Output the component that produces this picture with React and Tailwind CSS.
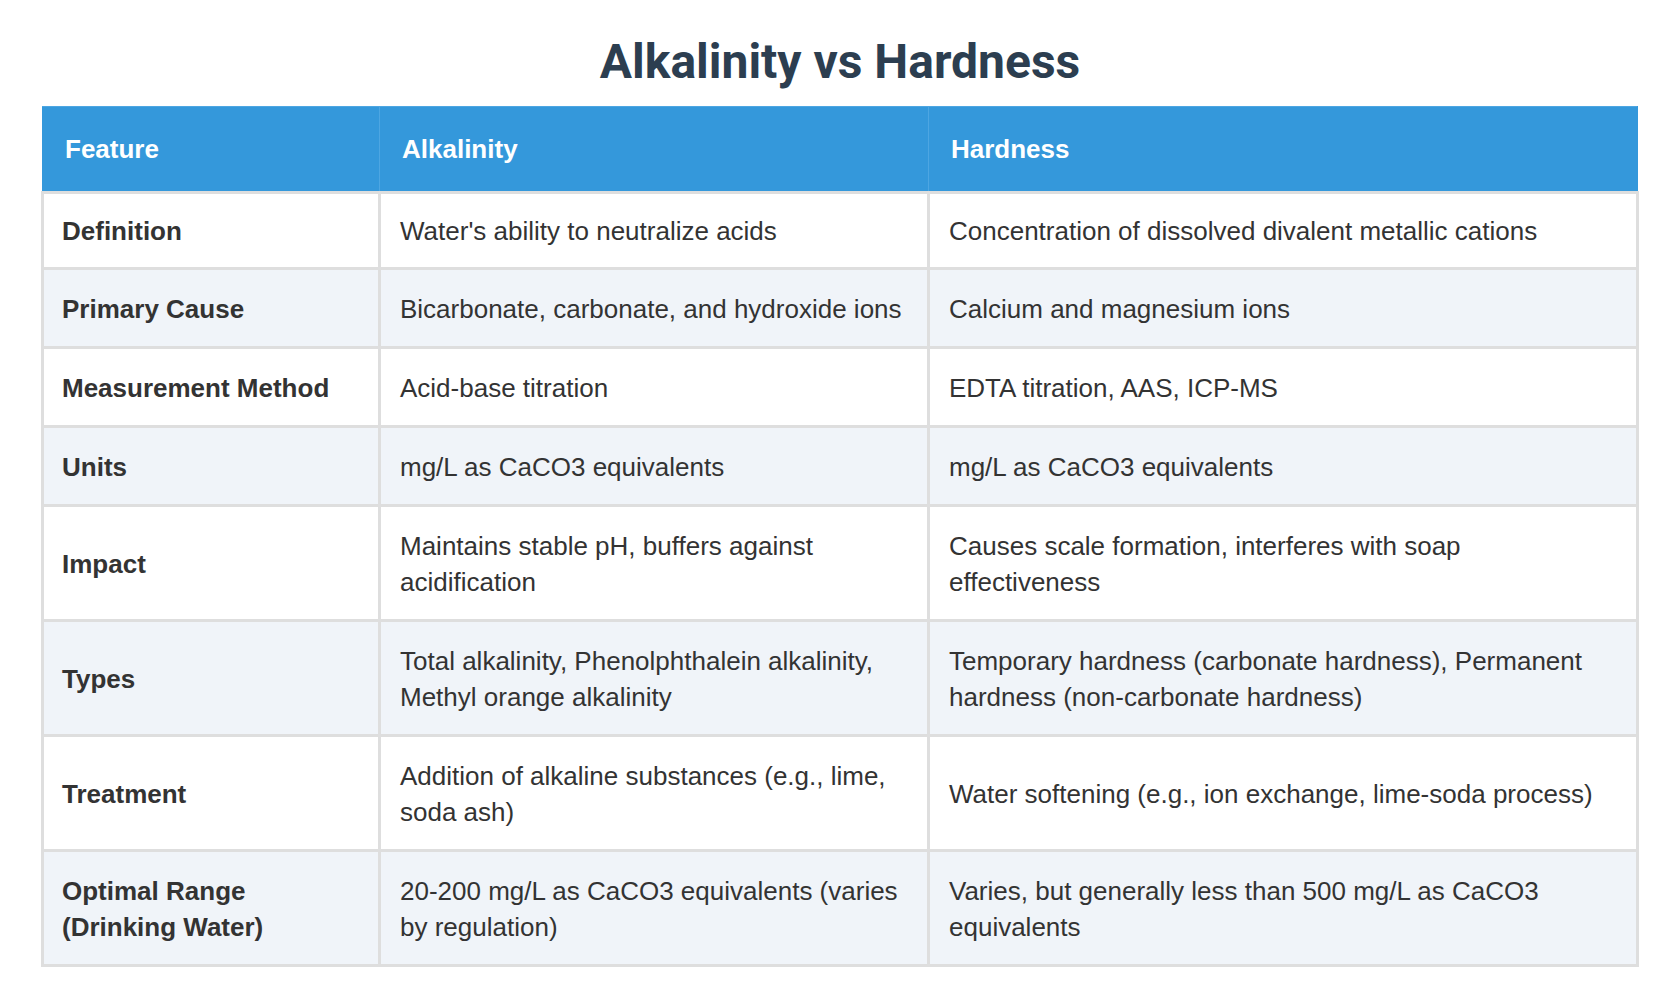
import React from "react";

const rows = [
  ["Definition", "Water's ability to neutralize acids", "Concentration of dissolved divalent metallic cations"],
  ["Primary Cause", "Bicarbonate, carbonate, and hydroxide ions", "Calcium and magnesium ions"],
  ["Measurement Method", "Acid-base titration", "EDTA titration, AAS, ICP-MS"],
  ["Units", "mg/L as CaCO3 equivalents", "mg/L as CaCO3 equivalents"],
  ["Impact", "Maintains stable pH, buffers against acidification", "Causes scale formation, interferes with soap effectiveness"],
  ["Types", "Total alkalinity, Phenolphthalein alkalinity, Methyl orange alkalinity", "Temporary hardness (carbonate hardness), Permanent hardness (non-carbonate hardness)"],
  ["Treatment", "Addition of alkaline substances (e.g., lime, soda ash)", "Water softening (e.g., ion exchange, lime-soda process)"],
  ["Optimal Range (Drinking Water)", "20-200 mg/L as CaCO3 equivalents (varies by regulation)", "Varies, but generally less than 500 mg/L as CaCO3 equivalents"],
];

export default function App() {
  return (
    <div className="min-h-screen bg-white pt-[34px] pb-[30px]" style={{ fontFamily: '"Liberation Sans", Arial, sans-serif' }}>
      <h1
        className="text-center text-[48px] leading-[56px] font-bold text-[#2c3e50] mb-[16px]"
        style={{ fontFamily: 'Roboto, "Liberation Sans", sans-serif' }}
      >
        Alkalinity vs Hardness
      </h1>
      <table className="w-[1598px] mx-auto table-fixed border-collapse text-[26px] leading-[36px]">
        <colgroup>
          <col className="w-[337px]" />
          <col className="w-[549px]" />
          <col />
        </colgroup>
        <thead>
          <tr className="bg-[#3498db] text-white">
            <th className="text-left font-bold px-[22px] py-6 border border-[#4da6e2] border-l-[#3498db]">Feature</th>
            <th className="text-left font-bold px-[22px] py-6 border border-[#4da6e2]">Alkalinity</th>
            <th className="text-left font-bold px-[22px] py-6 border border-[#4da6e2] border-r-[#3498db]">Hardness</th>
          </tr>
        </thead>
        <tbody>
          {rows.map((r, i) => {
            const py = i === 0 ? "pt-[19px] pb-[18px]" : "pt-[21px] pb-[19px]";
            return (
              <tr key={i} className={i % 2 === 1 ? "bg-[#f0f4f9]" : "bg-white"}>
                <td className={`border-[3px] border-[#dedede] pl-[18px] pr-[19px] ${py} align-middle font-bold text-[#333333]`}>{r[0]}</td>
                <td className={`border-[3px] border-[#dedede] px-[19px] ${py} align-middle text-[#333333]`}>{r[1]}</td>
                <td className={`border-[3px] border-[#dedede] px-[19px] ${py} align-middle text-[#333333]`}>{r[2]}</td>
              </tr>
            );
          })}
        </tbody>
      </table>
    </div>
  );
}
